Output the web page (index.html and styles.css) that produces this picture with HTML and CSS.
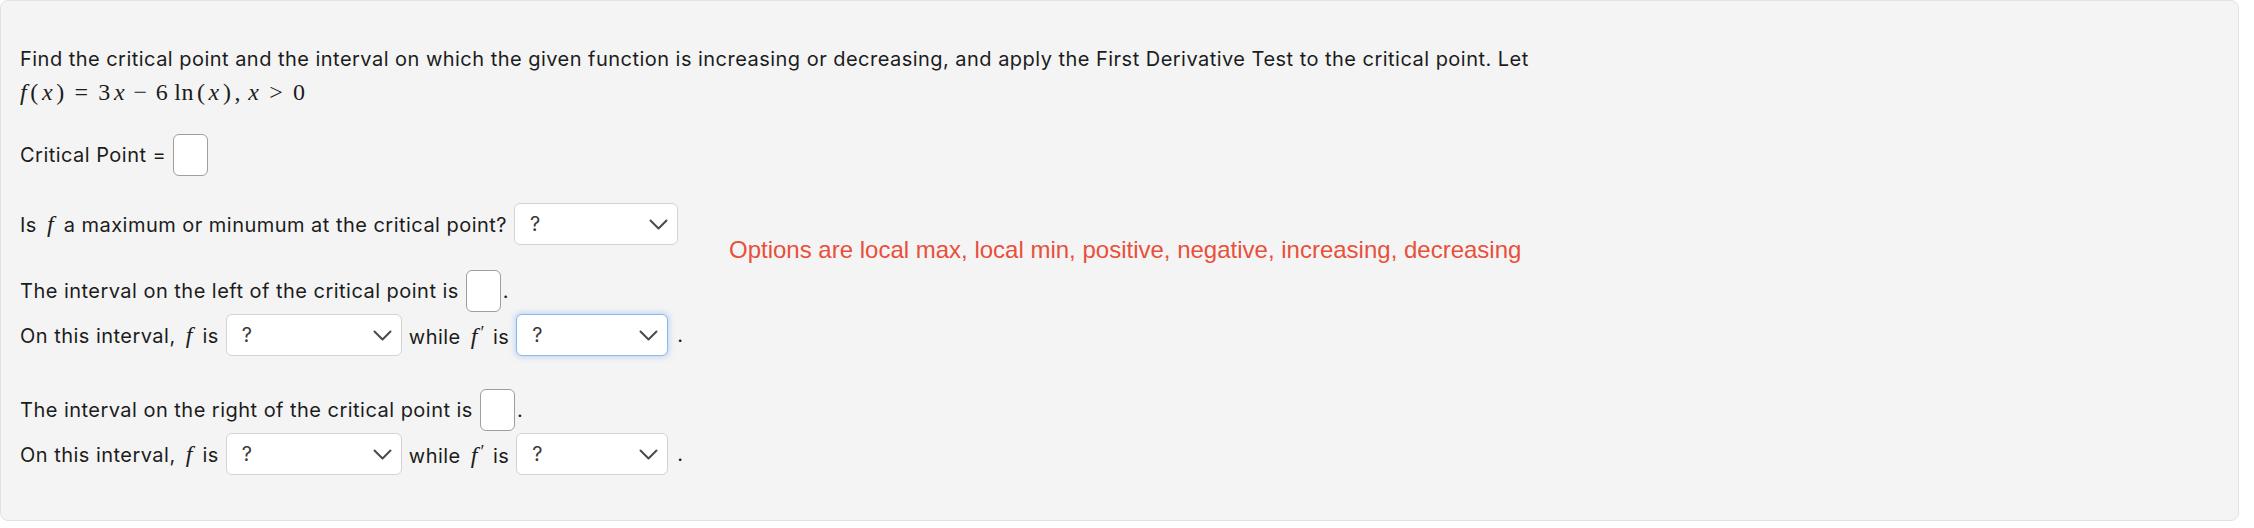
FILE: index.html
```html
<!DOCTYPE html>
<html lang="en">
<head>
    <meta charset="UTF-8">
    <title>First Derivative Test</title>
    <link rel="stylesheet" href="styles.css">
</head>
<body>
    <div class="problem">
        <!-- Statement -->
        <p class="intro">Find the critical point and the interval on which the given function is increasing or decreasing, and apply the First Derivative Test to the critical point. Let</p>
        <div class="math">
            <i>f</i>(<i>x</i>)<span class="rel">=</span>3<i>x</i><span class="bin">&minus;</span>6<span class="thin"></span><span class="op">ln</span>(<i>x</i>)<span class="punct">,</span><i>x</i><span class="rel">&gt;</span>0
        </div>

        <div class="row critical">
            <span>Critical Point =</span>
            <span class="answer-box"></span>
        </div>

        <!-- Max / min question -->
        <div class="options-row">
            <div class="row">
                <span>Is <i class="var">f</i> a maximum or minumum at the critical point?</span>
                <div class="select select-wide">
                    <span>?</span>
                    <svg width="19" height="11" viewBox="0 0 19 11" fill="none" stroke="#4a4a4a" stroke-width="2" stroke-linecap="round" stroke-linejoin="round"><path d="M1.5 1.5l8 8 8-8"></path></svg>
                </div>
            </div>
            <p class="note">Options are local max, local min, positive, negative, increasing, decreasing</p>
        </div>

        <!-- Left interval -->
        <div class="row interval">
            <span>The interval on the left of the critical point is</span>
            <span class="answer-box"></span>
            <span class="dot tight">.</span>
        </div>
        <div class="row behaviour">
            <span>On this interval, <i class="var">f</i> is</span>
            <div class="select select-f">
                <span>?</span>
                <svg width="19" height="11" viewBox="0 0 19 11" fill="none" stroke="#4a4a4a" stroke-width="2" stroke-linecap="round" stroke-linejoin="round"><path d="M1.5 1.5l8 8 8-8"></path></svg>
            </div>
            <span>while <i class="var">f</i><span class="prime">&prime;</span> is</span>
            <div class="select select-fp focused">
                <span>?</span>
                <svg width="19" height="11" viewBox="0 0 19 11" fill="none" stroke="#4a4a4a" stroke-width="2" stroke-linecap="round" stroke-linejoin="round"><path d="M1.5 1.5l8 8 8-8"></path></svg>
            </div>
            <span class="dot">.</span>
        </div>

        <!-- Right interval -->
        <div class="row interval right">
            <span>The interval on the right of the critical point is</span>
            <span class="answer-box"></span>
            <span class="dot tight">.</span>
        </div>
        <div class="row behaviour">
            <span>On this interval, <i class="var">f</i> is</span>
            <div class="select select-f">
                <span>?</span>
                <svg width="19" height="11" viewBox="0 0 19 11" fill="none" stroke="#4a4a4a" stroke-width="2" stroke-linecap="round" stroke-linejoin="round"><path d="M1.5 1.5l8 8 8-8"></path></svg>
            </div>
            <span>while <i class="var">f</i><span class="prime">&prime;</span> is</span>
            <div class="select select-fp">
                <span>?</span>
                <svg width="19" height="11" viewBox="0 0 19 11" fill="none" stroke="#4a4a4a" stroke-width="2" stroke-linecap="round" stroke-linejoin="round"><path d="M1.5 1.5l8 8 8-8"></path></svg>
            </div>
            <span class="dot">.</span>
        </div>
    </div>
</body>
</html>
```

FILE: styles.css
```css
* {
    margin: 0;
    padding: 0;
    box-sizing: border-box;
}

body {
    background-color: white;
    font-family: Inter, "Noto Sans", sans-serif;
    font-size: 20px;
    letter-spacing: 0.47px;
    line-height: 28px;
    color: #1c1c1c;
}

.problem {
    width: 2239px;
    padding: 44px 19px 45px;
    background-color: #f4f4f4;
    border: 1px solid #e2e2e2;
    border-radius: 8px;
}

/* Statement */
.math {
    margin-top: 5px;
    font-family: "Liberation Serif", "DejaVu Serif", serif;
    font-size: 24px;
    letter-spacing: 3.6px;
    line-height: 28px;
    white-space: nowrap;
}

.math .rel {
    margin: 0 0.28em;
}

.math .bin {
    margin: 0 0.22em;
}

.math .thin {
    display: inline-block;
    width: 0.12em;
}

.math .op {
    letter-spacing: 0.5px;
    margin-right: 3px;
}

.math .punct {
    margin-right: 0.17em;
}

.var {
    font-family: "Liberation Serif", "DejaVu Serif", serif;
    font-size: 24px;
    letter-spacing: 0;
    margin: 0 4px;
}

.prime {
    font-family: "Liberation Serif", "DejaVu Serif", serif;
    font-size: 18px;
    margin: 0 2px 0 -1px;
    vertical-align: 5px;
}

/* Rows */
.row {
    display: flex;
    align-items: center;
    gap: 7px;
    white-space: nowrap;
}

.critical {
    margin-top: 28px;
}

.options-row {
    display: flex;
    align-items: flex-start;
    gap: 51px;
    margin-top: 27px;
}

.note {
    margin-top: 33px;
    font-family: "Liberation Sans", Arial, sans-serif;
    font-size: 24px;
    letter-spacing: 0;
    color: #e8503b;
    white-space: nowrap;
}

.interval {
    margin-top: 6px;
}

.interval.right {
    margin-top: 33px;
}

.behaviour {
    margin-top: 2px;
}

.answer-box {
    width: 35px;
    height: 42px;
    background-color: white;
    border: 1px solid #9e9e9e;
    border-radius: 6px;
}

.dot {
    margin-left: 2px;
}

.dot.tight {
    margin-left: -5px;
}

/* Dropdowns */
.select {
    height: 42px;
    display: flex;
    align-items: center;
    justify-content: space-between;
    padding: 0 9px 0 15px;
    background-color: white;
    border: 1px solid #d3d3d3;
    border-radius: 6px;
    color: #3a3a3a;
}

.select-wide {
    width: 164px;
}

.select-f {
    width: 176px;
}

.select-fp {
    width: 152px;
}

.select.focused {
    border-color: #8db7ef;
    box-shadow: 0 0 5px 2px rgba(120, 170, 240, 0.35);
}
```
